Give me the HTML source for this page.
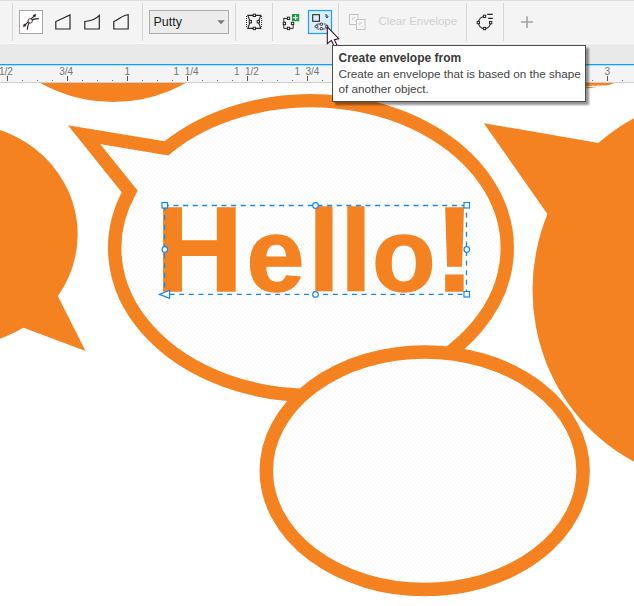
<!DOCTYPE html>
<html lang="en">
<head>
<meta charset="utf-8">
<title>Create envelope from</title>
<style>
  html, body { margin: 0; padding: 0; }
  body { width: 634px; height: 606px; overflow: hidden; background: #ffffff; position: relative;
         font-family: "Liberation Sans", sans-serif; }
  .abs { position: absolute; }
  #toolbar { left: 0; top: 0; width: 634px; height: 43px; background: #f4f4f4; }
  #topline { left: 0; top: 0; width: 634px; height: 1px; background: #dddddd; }
  #band { left: 0; top: 43px; width: 634px; height: 21px; background: #e9e9e9; border-top: 1px solid #fafafa; box-sizing: border-box; }
  #blueline { left: 0; top: 64px; width: 634px; height: 1px; background: #10a3f2; border-bottom: 1px solid #a9daf6; }
  #ruler { left: 0; top: 66px; width: 634px; height: 17px; background: #f4f4f4; border-bottom: 1px solid #cfcfcf; box-sizing: border-box; }
  .sep { width: 1px; top: 3px; height: 38px; background: #d6d6d6; }
  .rl { top: 65.5px; font-size: 10px; line-height: 11px; color: #767676; white-space: nowrap; word-spacing: 2.8px; }
  #dd { left: 149px; top: 10px; width: 80px; height: 24px; box-sizing: border-box; border: 1px solid #ababab; background: #ececec;
        font-size: 12.5px; line-height: 23px; padding-left: 3.5px; color: #1c1c24; }
  #clear { left: 378.500px; top: 13px; font-size: 11.5px; line-height: 17px; color: #cdd1d5; white-space: nowrap; }
  #tip { left: 332px; top: 45px; width: 254px; height: 57px; box-sizing: border-box; border: 1px solid #4c4c4c; background: #ffffff;
         box-shadow: 2.5px 2.5px 2px rgba(0,0,0,0.42); color: #444; font-size: 11.7px; line-height: 15px; white-space: nowrap; }
  #tip div { position: absolute; left: 5.500px; }
  #tip b { color: #3a3a3a; font-size: 12px; }
</style>
</head>
<body>

<!-- canvas artwork -->
<svg class="abs" style="left:0;top:83px" width="634" height="523" viewBox="0 83 634 523">
  <defs>
    <pattern id="dots" width="4" height="4" patternUnits="userSpaceOnUse">
      <rect width="4" height="4" fill="#ffffff"/>
      <rect x="1" y="1" width="1" height="1" fill="#f1f1f1"/>
      <rect x="3" y="3" width="1" height="1" fill="#fdf5ec"/>
    </pattern>
  </defs>
  <g fill="#f58220">
    <!-- top-left bubble -->
    <ellipse cx="113" cy="-46.4" rx="148.4" ry="148.4"/>
    <!-- left bubble -->
    <ellipse cx="-40" cy="234.3" rx="117.7" ry="111"/>
    <polygon points="57.8,296 85.5,351 21.7,327 30,290"/>
    <!-- right bubble -->
    <ellipse cx="718" cy="290" rx="185.5" ry="192.5"/>
    <polygon points="598.6,143 483.8,123.2 547.4,214 560,260 620,200"/>
    <!-- top-right sliver -->
    <polygon points="585,83 614.5,83 608.5,85.2 585,86"/>
    <polygon points="585,86.7 597,87.2 585,88.4"/>
  </g>
  <!-- centre bubble -->
  <path d="M166.5,148.3 A196.3 147.3 0 1 1 129.7,191.5 L84.1,134.7 Z" fill="url(#dots)" stroke="#f58220" stroke-width="13.4" stroke-linejoin="miter"/>
  <!-- lower ellipse -->
  <ellipse cx="424.7" cy="470.7" rx="158.4" ry="118.8" fill="url(#dots)" stroke="#f58220" stroke-width="13.5"/>
  <!-- text -->
  <text aria-label="Hello!" x="155.75 246.5 308 340.1 372 434.5" y="291" font-family="'Liberation Sans', sans-serif" font-weight="bold" font-size="121" fill="#f58220" stroke="#f58220" stroke-width="1.4" stroke-linejoin="miter">H<tspan font-size="104">e</tspan><tspan font-size="115">ll</tspan><tspan font-size="104">o</tspan>!</text>
  <!-- selection -->
  <g fill="none" stroke="#1389ee" stroke-width="1.3">
    <path d="M169.6,294.4 H466.5 M466.5,294.4 V205.5 M466.5,205.5 H164.5 M164.5,205.5 V290" stroke-dasharray="5 4.6"/>
  </g>
  <g fill="#ffffff" stroke="#1389ee" stroke-width="1.2">
    <rect x="162" y="202.5" width="5.5" height="5.5"/>
    <rect x="464" y="202.5" width="5.5" height="5.5"/>
    <rect x="464" y="291.5" width="5.5" height="5.5"/>
    <circle cx="315.5" cy="205.5" r="2.8"/>
    <circle cx="315.5" cy="294.4" r="2.8"/>
    <circle cx="164.8" cy="249.5" r="2.8"/>
    <circle cx="466.8" cy="249.5" r="2.8"/>
    <polygon points="159.5,294.4 169.6,290.3 169.6,298.4"/>
  </g>
</svg>

<!-- toolbar -->
<div id="toolbar" class="abs"></div>
<div id="topline" class="abs"></div>
<div id="band" class="abs"></div>
<div id="blueline" class="abs"></div>
<div id="ruler" class="abs"></div>

<div class="abs sep" style="left:12px"></div>
<div class="abs sep" style="left:142px"></div>
<div class="abs sep" style="left:235px"></div>
<div class="abs sep" style="left:272px"></div>
<div class="abs sep" style="left:338px"></div>
<div class="abs sep" style="left:466px"></div>
<div class="abs sep" style="left:503px"></div>

<div id="dd" class="abs">Putty</div>
<div id="clear" class="abs">Clear Envelope</div>

<!-- toolbar icons -->
<svg class="abs" style="left:0;top:0" width="634" height="46" viewBox="0 0 634 46">
  <!-- selected button 1 -->
  <rect x="19.5" y="10.5" width="23" height="23" fill="#ffffff" stroke="#a6a6a6"/>
  <g fill="none" stroke="#262626" stroke-width="1.15">
    <path d="M27.4,29.8 C27.5,25.500 28.800,22.300 31,20.600 C33,19 35.800,18.600 38.800,18.600"/>
    <path d="M24.300,25.700 L34.800,15.300"/>
  </g>
  <path d="M22.900,27.100 L24,23.500 L26.500,26 Z M36.200,13.900 L35.100,17.500 L32.600,15 Z" fill="#262626"/>
  <circle cx="30.200" cy="20.900" r="2.200" fill="#ffffff" stroke="#4a2f33" stroke-width="1"/>
  <!-- trapezoids -->
  <g fill="none" stroke="#222222" stroke-width="1.150" stroke-linejoin="miter">
    <path d="M55.800,29 V21.500 L70,14.900 V29 Z"/>
    <path d="M84.800,29 V21.500 C91,20.800 96.300,18.800 99.300,15.300 V29 Z"/>
    <path d="M113.800,29 V21.500 C119,20 122,14.800 128.200,14.700 V29 Z"/>
  </g>
  <!-- dropdown arrow -->
  <path d="M217.200,20.300 H224.800 L221,24.300 Z" fill="#7a7a7a"/>
  <!-- icon 5 -->
  <g fill="none" stroke="#262626" stroke-width="1.1">
    <path d="M247.800,15.400 H260.800 L258.300,21.800 L260.800,28.400 H247.800 L250.300,21.800 Z"/>
    <path d="M246.500,16 V28 M261.600,16 V28" stroke-dasharray="1 1" stroke-width="1"/>
  </g>
  <g fill="#fff" stroke="#262626" stroke-width="1">
    <rect x="253.200" y="14.200" width="2.300" height="2.300"/><rect x="253.200" y="27.300" width="2.300" height="2.300"/>
    <rect x="249.200" y="20.600" width="2.300" height="2.300"/><rect x="257.200" y="20.600" width="2.300" height="2.300"/>
  </g>
  <!-- icon 6 -->
  <g fill="none" stroke="#262626" stroke-width="1.1">
    <path d="M283.800,18.400 H288 M283.800,17.900 V28.400 H293.200 V24" stroke="#3a2c30" stroke-width="1"/>
  </g>
  <g fill="#fff" stroke="#262626" stroke-width="1">
    <rect x="287.400" y="17.200" width="2.300" height="2.300"/><rect x="287.400" y="27.300" width="2.300" height="2.300"/>
    <rect x="283.200" y="22.300" width="2.300" height="2.300"/><rect x="291.400" y="22.300" width="2.300" height="2.300"/>
  </g>
  <rect x="292" y="14" width="7.200" height="7.200" fill="#12a038"/>
  <path d="M295.600,15.300 V19.900 M293.300,17.600 H297.900" stroke="#fff" stroke-width="1.300"/>
  <!-- icon 7 highlighted -->
  <rect x="308.500" y="10.500" width="23" height="23" fill="#daeefc" stroke="#1ea0f5" stroke-width="1.200"/>
  <rect x="312.700" y="14.700" width="6.700" height="6.600" fill="none" stroke="#222" stroke-width="1.050"/>
  <path d="M325.100,14.900 H327 V17.700 M325.700,16.300 L327,17.800 L328.200,16.300" fill="none" stroke="#222" stroke-width="0.900"/>
  <rect x="316.600" y="24" width="10.200" height="5" rx="1.500" fill="none" stroke="#4a2a2e" stroke-width="0.900" stroke-dasharray="2 0.800"/>
  <g fill="#f4fbff" stroke="#222" stroke-width="0.950">
    <circle cx="316.400" cy="26.500" r="1.300"/><circle cx="326.700" cy="26.500" r="1.300"/>
    <circle cx="321.400" cy="24.200" r="1.250"/><circle cx="321.400" cy="28.700" r="1.250"/>
  </g>
  <!-- icon 8 disabled -->
  <g fill="#f7f7f7" stroke="#c2c2c6" stroke-width="1">
    <rect x="349.500" y="14.500" width="8.500" height="10"/>
    <rect x="356.500" y="19.500" width="8.500" height="10"/>
  </g>
  <g fill="none" stroke="#c2c2c6" stroke-width="0.900">
    <path d="M352,20.500 L355,17 M351.800,18 H353 M354.500,21 H355.800 M359,25.500 L362,22 M358.800,23 H360 M361.500,26.500 H362.800"/>
  </g>
  <!-- icon 9 -->
  <g fill="none" stroke="#3a2a2e" stroke-width="1.100">
    <path d="M484.500,16.500 A6.100 6.100 0 1 0 490.600,22.600"/>
    <path d="M487.200,14.400 H492.800 M488.200,18.300 H492.800" stroke="#262626" stroke-width="1.200"/>
  </g>
  <g fill="#fff" stroke="#262626" stroke-width="1">
    <rect x="483.400" y="15.200" width="2.300" height="2.300"/><rect x="477.200" y="21.400" width="2.300" height="2.300"/>
    <rect x="483.400" y="27.400" width="2.300" height="2.300"/><rect x="489.500" y="21.500" width="2.300" height="2.300"/>
  </g>
  <!-- plus -->
  <path d="M527,16.200 V28 M521,22 H533" stroke="#a3a3a6" stroke-width="1.600" fill="none"/>
</svg>

<!-- ruler labels -->
<div class="abs rl" style="left:-1px">1/2</div>
<div class="abs rl" style="left:59.2px">3/4</div>
<div class="abs rl" style="left:124.6px">1</div>
<div class="abs rl" style="left:173.6px">1 1/4</div>
<div class="abs rl" style="left:233.9px">1 1/2</div>
<div class="abs rl" style="left:294.4px">1 3/4</div>
<div class="abs rl" style="left:604.6px">3</div>
<svg class="abs" style="left:0;top:66px" width="634" height="17" viewBox="0 0 634 17">
  <path d="M7.500,10 V15 M67.500,10 V15 M127.500,10 V15 M187.500,10 V15 M247.500,10 V15 M307.500,10 V15 M367.500,10 V15 M427.500,10 V15 M487.500,10 V15 M547.500,10 V15 M607.500,10 V15" stroke="#555" stroke-width="1"/>
  <path d="M22.500,14 V15 M37.500,14 V15 M52.500,14 V15 M82.500,14 V15 M97.500,14 V15 M112.500,14 V15 M142.500,14 V15 M157.500,14 V15 M172.500,14 V15 M202.500,14 V15 M217.500,14 V15 M232.500,14 V15 M262.500,14 V15 M277.500,14 V15 M292.500,14 V15 M322.500,14 V15 M592.500,14 V15 M622.500,14 V15" stroke="#666" stroke-width="1"/>
</svg>

<!-- cursor -->
<svg class="abs" style="left:320px;top:20px" width="24" height="30" viewBox="320 20 24 30">
  <path d="M327.300,26.800 V43.600 L331.400,40.300 L334.100,46.300 L336.900,45 L334.400,39.700 L338.700,38.700 Z" fill="#ffffff" stroke="#3a0a35" stroke-width="1.050" stroke-linejoin="miter"/>
</svg>

<!-- tooltip -->
<div id="tip" class="abs"><div style="top:4px"><b>Create envelope from</b></div><div style="top:20px">Create an envelope that is based on the shape</div><div style="top:35px">of another object.</div></div>

</body>
</html>
